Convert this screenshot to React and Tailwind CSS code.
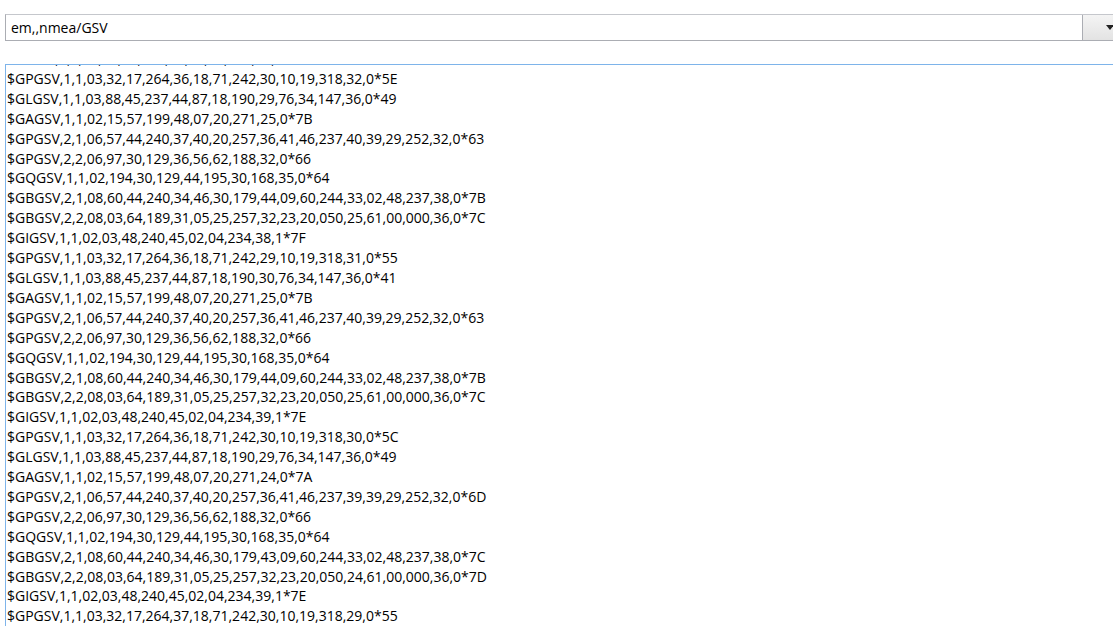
import React from "react";

const prevLine = "$GIGSV,1,1,02,03,48,240,45,02,04,234,38,1*7F";

const lines = [
  "$GPGSV,1,1,03,32,17,264,36,18,71,242,30,10,19,318,32,0*5E",
  "$GLGSV,1,1,03,88,45,237,44,87,18,190,29,76,34,147,36,0*49",
  "$GAGSV,1,1,02,15,57,199,48,07,20,271,25,0*7B",
  "$GPGSV,2,1,06,57,44,240,37,40,20,257,36,41,46,237,40,39,29,252,32,0*63",
  "$GPGSV,2,2,06,97,30,129,36,56,62,188,32,0*66",
  "$GQGSV,1,1,02,194,30,129,44,195,30,168,35,0*64",
  "$GBGSV,2,1,08,60,44,240,34,46,30,179,44,09,60,244,33,02,48,237,38,0*7B",
  "$GBGSV,2,2,08,03,64,189,31,05,25,257,32,23,20,050,25,61,00,000,36,0*7C",
  "$GIGSV,1,1,02,03,48,240,45,02,04,234,38,1*7F",
  "$GPGSV,1,1,03,32,17,264,36,18,71,242,29,10,19,318,31,0*55",
  "$GLGSV,1,1,03,88,45,237,44,87,18,190,30,76,34,147,36,0*41",
  "$GAGSV,1,1,02,15,57,199,48,07,20,271,25,0*7B",
  "$GPGSV,2,1,06,57,44,240,37,40,20,257,36,41,46,237,40,39,29,252,32,0*63",
  "$GPGSV,2,2,06,97,30,129,36,56,62,188,32,0*66",
  "$GQGSV,1,1,02,194,30,129,44,195,30,168,35,0*64",
  "$GBGSV,2,1,08,60,44,240,34,46,30,179,44,09,60,244,33,02,48,237,38,0*7B",
  "$GBGSV,2,2,08,03,64,189,31,05,25,257,32,23,20,050,25,61,00,000,36,0*7C",
  "$GIGSV,1,1,02,03,48,240,45,02,04,234,39,1*7E",
  "$GPGSV,1,1,03,32,17,264,36,18,71,242,30,10,19,318,30,0*5C",
  "$GLGSV,1,1,03,88,45,237,44,87,18,190,29,76,34,147,36,0*49",
  "$GAGSV,1,1,02,15,57,199,48,07,20,271,24,0*7A",
  "$GPGSV,2,1,06,57,44,240,37,40,20,257,36,41,46,237,39,39,29,252,32,0*6D",
  "$GPGSV,2,2,06,97,30,129,36,56,62,188,32,0*66",
  "$GQGSV,1,1,02,194,30,129,44,195,30,168,35,0*64",
  "$GBGSV,2,1,08,60,44,240,34,46,30,179,43,09,60,244,33,02,48,237,38,0*7C",
  "$GBGSV,2,2,08,03,64,189,31,05,25,257,32,23,20,050,24,61,00,000,36,0*7D",
  "$GIGSV,1,1,02,03,48,240,45,02,04,234,39,1*7E",
  "$GPGSV,1,1,03,32,17,264,37,18,71,242,30,10,19,318,29,0*55",
];

const ComboBox = () => {
  return (
    <div className="-mr-[6px] ml-[5px] mt-[14px] flex h-[27px] border border-[#abadb3] border-t-[#c5c7cc] bg-white">
      <div className="flex flex-1 items-center pl-[5px] text-[14px] text-black">
        em,,nmea/GSV
      </div>
      <div className="flex w-[36px] items-center justify-end border-l border-[#abadb3] bg-gradient-to-b from-[#f4f4f4] to-[#e3e3e3] pr-[4px]">
        <svg width="8" height="5" viewBox="0 0 8 5">
          <path d="M0 0H8L4 5Z" fill="#222" />
        </svg>
      </div>
    </div>
  );
};

export default function App() {
  return (
    <div
      className="h-[626px] w-[1113px] overflow-hidden bg-white"
      style={{ fontFamily: '"Open Sans", "Noto Sans", sans-serif' }}
    >
      <ComboBox />
      <div className="ml-[5px] mt-[23px] h-[600px] overflow-hidden border-l border-t border-[#7eb4ea]">
        <div className="-mt-[16px] pl-[1px] text-[14px] leading-[19.9px] text-black">
          <div className="whitespace-nowrap">{prevLine}</div>
          {lines.map((l, i) => (
            <div key={i} className="whitespace-nowrap">
              {l}
            </div>
          ))}
        </div>
      </div>
    </div>
  );
}
